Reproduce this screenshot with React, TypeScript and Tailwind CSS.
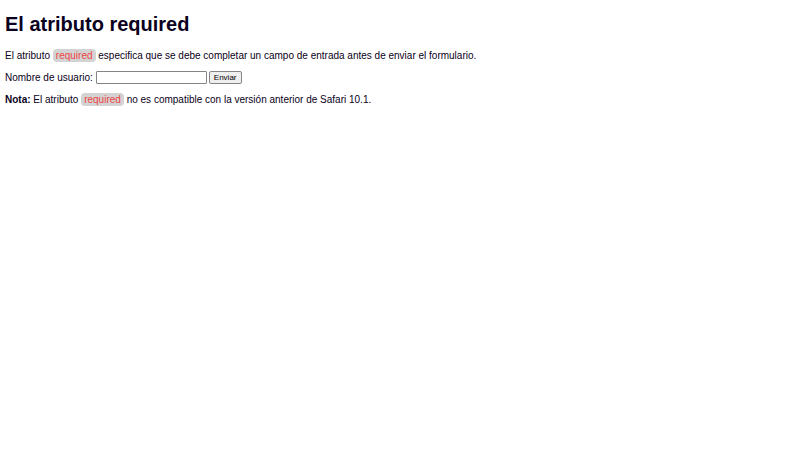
import type { ReactNode } from 'react';

function Code({ children }: { children: ReactNode }) {
  return <span className="rounded bg-[#d3d3d3] px-[3px] py-px text-[#ee4444]">{children}</span>;
}

export default function App() {
  return (
    <main className="px-[5px] py-3 font-['Liberation_Sans',Arial,sans-serif] text-[10px] leading-3 text-[#0a0020]">
      <h1 className="text-xl leading-6 font-bold">El atributo required</h1>

      <p className="mt-3.5">
        El atributo <Code>required</Code> especifica que se debe completar un campo de entrada antes
        de enviar el formulario.
      </p>

      <form className="mt-[9px] flex items-center" onSubmit={(e) => e.preventDefault()}>
        <label htmlFor="username" className="mr-[3px]">
          Nombre de usuario:
        </label>
        <input
          id="username"
          name="username"
          type="text"
          required
          className="mr-0.5 h-[13px] w-[111px] rounded-[1px] border border-[#858585] bg-white px-0.5"
        />
        <button
          type="submit"
          className="h-[13px] rounded-xs border border-[#858585] bg-[#efefef] px-1 text-[8px] leading-none text-black"
        >
          Enviar
        </button>
      </form>

      <p className="mt-2.5">
        <b>Nota:</b> El atributo <Code>required</Code> no es compatible con la versión anterior de
        Safari 10.1.
      </p>
    </main>
  );
}
